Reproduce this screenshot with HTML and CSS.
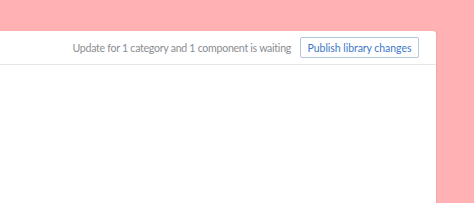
FILE: index.html
```html
<!DOCTYPE html>
<html lang="en">
<head>
    <meta charset="UTF-8">
    <title>Library</title>
    <link rel="stylesheet" href="styles.css">
</head>
<body>
    <div class="panel">
        <div class="panel-header">
            <span class="status">Update for 1 category and 1 component is waiting</span>
            <button class="publish-btn">Publish library changes</button>
        </div>
        <div class="panel-body"></div>
    </div>
</body>
</html>
```

FILE: styles.css
```css
body {
    margin: 0;
    background-color: #ffb1b4;
    font-family: 'Lato', 'Open Sans', sans-serif;
    height: 203px;
    overflow: hidden;
}

.panel {
    margin-top: 31px;
    width: 436px;
    height: 172px;
    background-color: white;
    border-top-right-radius: 3px;
    box-shadow: 1px 0 2px rgba(0, 0, 0, 0.06);
}

.panel-header {
    height: 34px;
    display: flex;
    justify-content: flex-end;
    align-items: center;
    gap: 9px;
    padding-right: 17px;
    border-bottom: 1px solid #e4e6e9;
    box-sizing: border-box;
}

.status {
    font-size: 10.6px;
    letter-spacing: -0.28px;
    color: #8a8d92;
    white-space: nowrap;
}

.publish-btn {
    height: 21px;
    width: 119px;
    padding: 0;
    border: 1px solid #b2c6e0;
    border-radius: 2px;
    background-color: white;
    color: #3d78c9;
    font-family: inherit;
    font-size: 10.5px;
    letter-spacing: -0.05px;
    white-space: nowrap;
}
```
